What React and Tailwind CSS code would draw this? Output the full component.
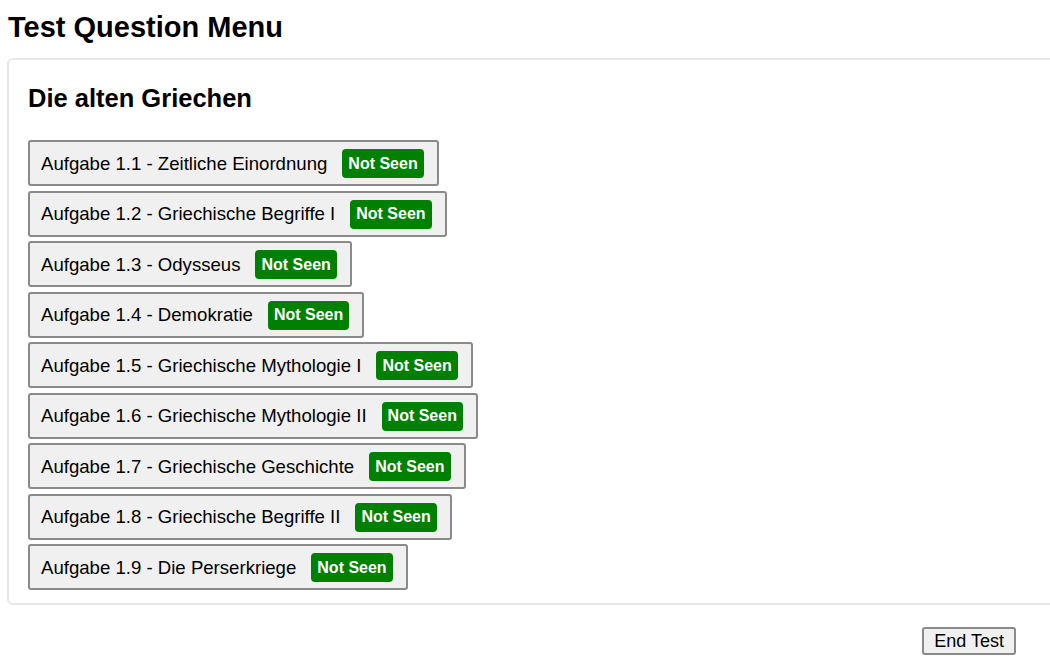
const tasks = [
  "Aufgabe 1.1 - Zeitliche Einordnung",
  "Aufgabe 1.2 - Griechische Begriffe I",
  "Aufgabe 1.3 - Odysseus",
  "Aufgabe 1.4 - Demokratie",
  "Aufgabe 1.5 - Griechische Mythologie I",
  "Aufgabe 1.6 - Griechische Mythologie II",
  "Aufgabe 1.7 - Griechische Geschichte",
  "Aufgabe 1.8 - Griechische Begriffe II",
  "Aufgabe 1.9 - Die Perserkriege",
]

function TaskButton({ title }) {
  return (
    <button className="flex items-center gap-[15px] border-2 border-[#8a8a8a] rounded-[3px] bg-[#f0f0f0] pl-[11px] pr-[13px] pt-[7px] pb-[6px] text-[18.6px] leading-[22px] text-black">
      <span>{title}</span>
      <span className="flex h-[29px] items-center rounded-[4px] bg-[#008000] px-[6px] text-[16px] font-bold text-white">
        Not Seen
      </span>
    </button>
  )
}

export default function App() {
  return (
    <div className="w-[1050px] h-[670px] overflow-hidden bg-white px-[7px] font-['Liberation_Sans',Arial,sans-serif]">
      <h1 className="mt-[11px] ml-[1px] text-[29px] leading-[33px] font-bold text-black">
        Test Question Menu
      </h1>

      <div className="mt-[14px] w-[1070px] rounded-[6px] border-2 border-[#e8e8e8] pt-[24px] pb-[13px] pl-[19px]">
        <h2 className="text-[25.5px] leading-[29px] font-bold text-black">Die alten Griechen</h2>
        <div className="mt-[27px] flex flex-col items-start gap-[4.5px]">
          {tasks.map((t) => (
            <TaskButton key={t} title={t} />
          ))}
        </div>
      </div>

      <div className="mt-[22px] flex justify-end pr-[27px]">
        <button className="h-[28px] rounded-[3px] border-2 border-[#8a8a8a] bg-[#f0f0f0] px-[10px] text-[18px] leading-[20px] text-black">
          End Test
        </button>
      </div>
    </div>
  )
}
